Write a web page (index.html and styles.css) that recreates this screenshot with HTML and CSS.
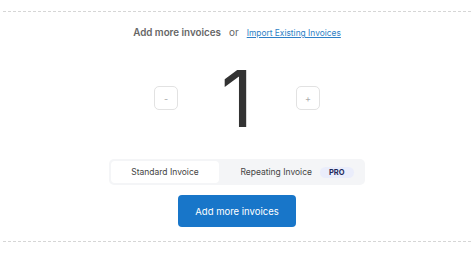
FILE: index.html
```html
<!DOCTYPE html>
<html>
<head>
<meta charset="utf-8">
<link rel="stylesheet" href="styles.css">
</head>
<body>
<div class="panel">
  <div class="header">
    <span class="title">Add more invoices</span>
    <span class="or">or</span>
    <a class="link" href="#">Import Existing Invoices</a>
  </div>
  <div class="counter">
    <button class="step">-</button>
    <div class="count">1</div>
    <button class="step">+</button>
  </div>
  <div class="tabs">
    <div class="tab active">Standard Invoice</div>
    <div class="tab other">Repeating Invoice <span class="pro">PRO</span></div>
  </div>
  <button class="primary">Add more invoices</button>
</div>
</body>
</html>
```
FILE: styles.css
```css
html, body { margin: 0; padding: 0; background: #fff; }
body { font-family: Inter, "Noto Sans", sans-serif; }
.panel {
  margin: 11px 3px 0 3px;
  border-top: 1px dashed #d6d6d6;
  border-bottom: 1px dashed #d6d6d6;
  height: 231px;
  box-sizing: border-box;
  display: flex;
  flex-direction: column;
  align-items: center;
}
.header {
  margin-top: 14px;
  display: flex;
  align-items: baseline;
  gap: 8px;
  height: 14px;
}
.title { font-size: 9.8px; font-weight: 600; color: #666; }
.or { font-size: 10px; color: #666; }
.link { font-size: 8.4px; color: #2d7fc6; text-decoration: underline; }
.counter {
  margin-top: 20px;
  display: flex;
  align-items: center;
}
.step {
  width: 24px; height: 24px;
  border: 1.5px solid #e2e2e2;
  border-radius: 5px;
  background: #fff;
  color: #aaa;
  font-size: 9px;
  padding: 0;
  font-family: Inter, sans-serif;
}
.count {
  width: 118px;
  text-align: center;
  font-size: 79px;
  line-height: 76px;
  color: #333;
  font-weight: 400;
}
.tabs {
  margin-top: 23px;
  display: flex;
  background: #f4f5f7;
  border-radius: 5px;
  padding: 2px;
  width: 256px;
  box-sizing: border-box;
  height: 26px;
}
.tab {
  display: flex; align-items: center; justify-content: center;
  font-size: 8.5px; color: #444;
  border-radius: 4px;
}
.tab.active { background: #fff; width: 108px; }
.tab.other { flex: 1; gap: 8px; padding-left: 12px; }
.pro {
  background: #eaedfb; color: #1f2a5c; font-weight: 700; font-size: 7.5px;
  padding: 2px 9px; border-radius: 8px; line-height: 7px;
}
.primary {
  margin-top: 10px;
  width: 118px; height: 32px;
  background: #1876c9;
  border: none; border-radius: 4px;
  color: #fff;
  font-family: Inter, sans-serif;
  font-size: 9.5px;
}
```
